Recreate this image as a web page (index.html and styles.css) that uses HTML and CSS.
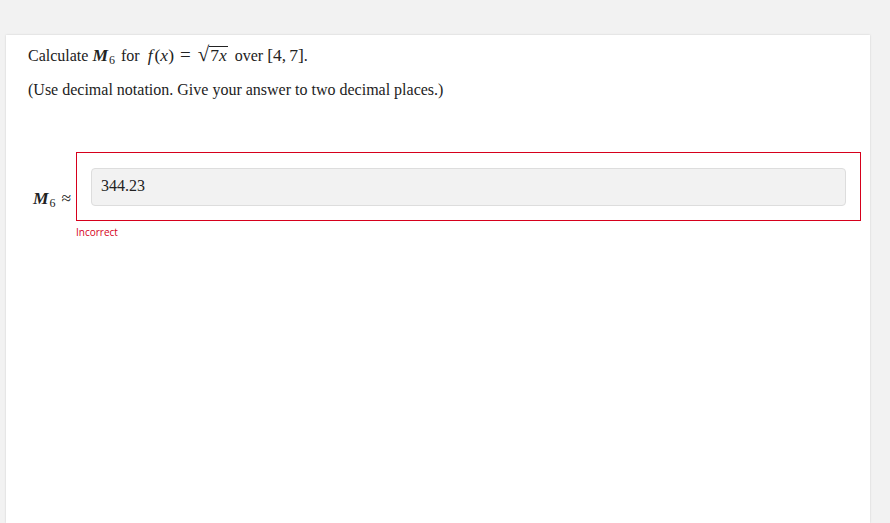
FILE: index.html
```html
<!DOCTYPE html>
<html lang="en">
<head>
  <meta charset="UTF-8">
  <title>Midpoint Rule</title>
  <link rel="stylesheet" href="styles.css">
</head>
<body>
  <div class="card">
    <p class="question">Calculate <span class="math"><i class="var">M</i><sub>6</sub></span> for <span class="math expr"><i class="fn">f</i>(<i>x</i>)<span class="op">=</span><span class="sqrt"><span class="rad">√</span><span class="under">7<i>x</i></span></span></span> over <span class="math">[4,<span class="thin"></span>7]</span>.</p>
    <p class="question">(Use decimal notation. Give your answer to two decimal places.)</p>

    <div class="answer-row">
      <div class="answer-label"><span class="math"><i class="var">M</i><sub>6</sub><span class="approx">≈</span></span></div>
      <div class="answer-col">
        <div class="answer-box wrong">
          <input type="text" class="answer-input" value="344.23">
        </div>
        <div class="feedback">Incorrect</div>
      </div>
    </div>
  </div>
</body>
</html>
```

FILE: styles.css
```css
body { margin: 0; background: #f2f2f2; font-family: "Liberation Serif", "Times New Roman", serif; color: #222; }
.card { margin: 35px 0 0 6px; width: 864px; height: 488px; background: #fff; box-shadow: 0 0 2px rgba(0,0,0,0.15); padding: 9px 0 0 22px; box-sizing: border-box; }
.question { font-size: 16px; line-height: 20px; margin: 0 0 14px 0; }
.math { font-size: 17.5px; }
.question sub { margin-right: 2px; }
.expr { margin-left: 4px; }
.fn { margin-right: 2px; }
.var { font-weight: bold; }
sub { font-size: 12px; vertical-align: -3px; line-height: 0; font-weight: normal; margin-left: 1px; }
.op { margin: 0 7px 0 6px; font-size: 19px; }
.sqrt { display: inline-block; margin-right: 3px; }
.rad { font-size: 21px; margin-right: 0; }
.under { border-top: 1px solid #222; padding: 0 1px; line-height: 17px; display: inline-block; }
.thin { display: inline-block; width: 3px; }
.answer-row { display: flex; margin-top: 52px; padding-left: 5px; }
.answer-label { width: 43px; padding-top: 36px; line-height: 20px; }
.approx { margin-left: 6px; }
.answer-col { width: 785px; }
.answer-box { border: 1px solid #d6001c; padding: 15px 14px 14px 14px; }
.answer-input { width: 100%; box-sizing: border-box; height: 38px; border: 1px solid #ddd; border-radius: 4px; background: #f2f2f2; font-family: "Liberation Serif", "Times New Roman", serif; font-size: 16px; color: #222; padding: 0 9px 3px 9px; margin: 0; outline: none; }
.feedback { font-family: "Open Sans", sans-serif; font-size: 10px; color: #d6001c; margin-top: 4px; }
```
